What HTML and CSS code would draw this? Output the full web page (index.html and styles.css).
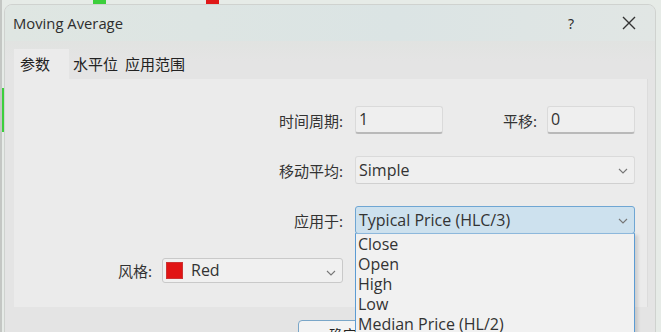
FILE: index.html
```html
<!DOCTYPE html>
<html lang="zh-CN">
<head>
    <meta charset="UTF-8">
    <title>Moving Average</title>
    <link rel="stylesheet" href="styles.css">
</head>
<body>

    <!-- chart behind the dialog -->
    <div class="chart">
        <span class="candle up" style="left: 91px; top: -6px; height: 10px;"></span>
        <span class="candle down" style="left: 204px; top: -6px; height: 10px;"></span>
        <span class="candle up" style="left: -4px; top: 88px; height: 44px;"></span>
    </div>

    <div class="dialog">
        <div class="titlebar">
            <span class="title">Moving Average</span>
            <span class="help">?</span>
            <svg class="close" width="14" height="14" viewBox="0 0 14 14">
                <path d="M1 1 L13 13 M13 1 L1 13" stroke="#333" stroke-width="1.4" fill="none"/>
            </svg>
        </div>

        <div class="content">
            <div class="tabs">
                <div class="tab active">参数</div>
                <div class="tab">水平位</div>
                <div class="tab">应用范围</div>
            </div>

            <div class="panel">
                <div class="row first">
                    <label class="lbl wide">时间周期:</label>
                    <div class="field short">1</div>
                    <label class="lbl mid">平移:</label>
                    <div class="field short">0</div>
                </div>

                <div class="row">
                    <label class="lbl wide">移动平均:</label>
                    <div class="field select long">
                        <span>Simple</span>
                        <svg class="chev" width="10" height="6" viewBox="0 0 10 6"><path d="M1 1 L5 5 L9 1" stroke="#777" stroke-width="1.1" fill="none"/></svg>
                    </div>
                </div>

                <div class="row">
                    <label class="lbl wide">应用于:</label>
                    <div class="field select long focus">
                        <span>Typical Price (HLC/3)</span>
                        <svg class="chev" width="10" height="6" viewBox="0 0 10 6"><path d="M1 1 L5 5 L9 1" stroke="#777" stroke-width="1.1" fill="none"/></svg>
                        <ul class="dropdown">
                            <li>Close</li>
                            <li>Open</li>
                            <li>High</li>
                            <li>Low</li>
                            <li>Median Price (HL/2)</li>
                        </ul>
                    </div>
                </div>

                <div class="row">
                    <label class="lbl narrow">风格:</label>
                    <div class="field select color">
                        <span class="swatch"></span>
                        <span>Red</span>
                        <svg class="chev" width="10" height="6" viewBox="0 0 10 6"><path d="M1 1 L5 5 L9 1" stroke="#777" stroke-width="1.1" fill="none"/></svg>
                    </div>
                </div>
            </div>

            <div class="buttons">
                <button class="btn">确定</button>
            </div>
        </div>
    </div>

</body>
</html>
```

FILE: styles.css
```css
* {
    margin: 0;
    padding: 0;
    box-sizing: border-box;
}

body {
    width: 661px;
    height: 332px;
    overflow: hidden;
    background-color: #e6ebe7;
    font-family: 'Noto Sans', 'Noto Sans CJK SC', sans-serif;
    color: #2e2e2e;
    padding: 4px 0 0 2px;
    position: relative;
    border-left: 2px solid #c4c7c4;
}

/* Chart behind */
.chart {
    position: absolute;
    inset: 0;
}

.candle {
    position: absolute;
    width: 13px;
}

.candle.up {
    background-color: #3ccf3c;
}

.candle.down {
    background-color: #e01818;
}

/* Dialog window */
.dialog {
    position: relative;
    width: 652px;
    height: 340px;
    background-color: #e3e3e3;
    border: 1px solid #cfd2cf;
    border-radius: 8px 8px 0 0;
    overflow: hidden;
}

.titlebar {
    height: 36px;
    display: flex;
    align-items: center;
    padding-left: 8px;
    background: linear-gradient(90deg, #dfe6e2 0%, #dbe4e4 60%, #e1e6e4 100%);
}

.title {
    font-family: 'Open Sans', sans-serif;
    font-size: 14.8px;
    flex: 1;
}

.help {
    font-size: 14px;
    margin-right: 48px;
}

.close {
    margin-right: 19px;
}

.content {
    padding: 8px 6px 0 9px;
    background: linear-gradient(180deg, #e1e3e1 0%, #e4e4e4 20px);
}

/* Tabs */
.tabs {
    display: flex;
    height: 30px;
    align-items: flex-end;
}

.tab {
    font-size: 15px;
    height: 28px;
    line-height: 27px;
    padding: 0 3px;
    margin-right: 1px;
    color: #222;
}

.tab.active {
    height: 30px;
    line-height: 30px;
    width: 55px;
    padding-left: 6px;
    background-color: #ebebeb;
}

/* Panel */
.panel {
    width: 634px;
    height: 228px;
    background-color: #ebebeb;
    border-right: 1px solid #dcdcdc;
    padding-top: 27px;
}

.row {
    display: flex;
    align-items: center;
    margin-bottom: 22px;
    height: 28px;
}

.lbl {
    font-size: 15px;
    text-align: right;
    color: #333;
}

.lbl.wide {
    width: 329px;
    margin-right: 12px;
}

.lbl.mid {
    width: 94px;
    margin-right: 10px;
}

.lbl.narrow {
    width: 138px;
    margin-right: 10px;
}

.field {
    position: relative;
    height: 28px;
    background-color: #efefef;
    border: 1px solid #dadada;
    border-bottom: 2px solid #b9b9b9;
    border-radius: 3px;
    font-family: 'Open Sans', sans-serif;
    font-size: 16px;
    line-height: 24px;
    padding-left: 3px;
    color: #333;
}

.field.short {
    width: 88px;
}

.field.select {
    display: flex;
    align-items: center;
    border-bottom: 1px solid #d0d0d0;
}

.field.long {
    width: 280px;
}

.field.focus {
    background-color: #cde1ee;
    border: 1px solid #6fa6d3;
}

.chev {
    position: absolute;
    right: 6px;
    top: 11px;
}

.field.color {
    width: 181px;
    height: 25px;
    border: 1px solid #c9c9c9;
    background-color: #f0f0f0;
}

.swatch {
    width: 17px;
    height: 17px;
    background-color: #e11414;
    border: 1px solid #c33;
    margin-right: 8px;
}

/* Open list */
.dropdown {
    position: absolute;
    z-index: 2;
    top: 26px;
    left: -1px;
    width: 280px;
    height: 110px;
    list-style: none;
    background-color: #f1f1f1;
    border: 1px solid #5b9bd3;
    border-top: 1px solid #8db8dc;
    box-shadow: 3px 2px 3px rgba(0, 0, 0, 0.12);
}

.dropdown li {
    height: 20px;
    line-height: 20px;
    padding-left: 2px;
    font-size: 16px;
}

/* Button row */
.buttons {
    padding-top: 13px;
    padding-left: 284px;
}

.btn {
    width: 90px;
    height: 28px;
    border: 1px solid #7aa6c8;
    border-radius: 4px;
    background-color: #f3f3f3;
    font-family: 'Noto Sans CJK SC', sans-serif;
    font-size: 14px;
    color: #222;
}
```
